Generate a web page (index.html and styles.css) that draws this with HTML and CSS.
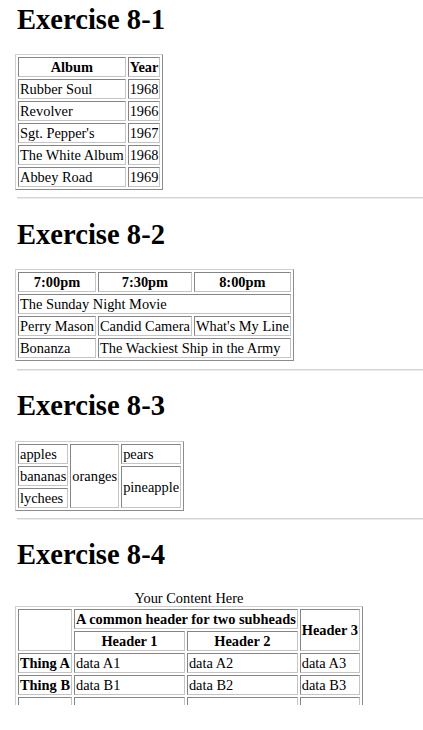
FILE: index.html
```html
<!DOCTYPE html>
<html>
<head>
<meta charset="utf-8">
<title>Exercises</title>
<link rel="stylesheet" href="styles.css">
</head>
<body>
<div class="page">
  <h1 class="first">Exercise 8-1</h1>
  <table class="grid">
    <tr><th>Album</th><th>Year</th></tr>
    <tr><td>Rubber Soul</td><td>1968</td></tr>
    <tr><td>Revolver</td><td>1966</td></tr>
    <tr><td>Sgt. Pepper's</td><td>1967</td></tr>
    <tr><td>The White Album</td><td>1968</td></tr>
    <tr><td>Abbey Road</td><td>1969</td></tr>
  </table>
  <hr class="rule">

  <h1>Exercise 8-2</h1>
  <table class="grid">
    <tr><th>7:00pm</th><th>7:30pm</th><th>8:00pm</th></tr>
    <tr><td colspan="3">The Sunday Night Movie</td></tr>
    <tr><td>Perry Mason</td><td>Candid Camera</td><td>What's My Line</td></tr>
    <tr><td>Bonanza</td><td colspan="2">The Wackiest Ship in the Army</td></tr>
  </table>
  <hr class="rule">

  <h1>Exercise 8-3</h1>
  <table class="grid">
    <tr><td>apples</td><td rowspan="3">oranges</td><td>pears</td></tr>
    <tr><td>bananas</td><td rowspan="2">pineapple</td></tr>
    <tr><td>lychees</td></tr>
  </table>
  <hr class="rule">

  <h1>Exercise 8-4</h1>
  <table class="grid">
    <caption>Your Content Here</caption>
    <tr><td rowspan="2"></td><th colspan="2">A common header for two subheads</th><th rowspan="2">Header 3</th></tr>
    <tr><th>Header 1</th><th>Header 2</th></tr>
    <tr><th>Thing A</th><td>data A1</td><td>data A2</td><td>data A3</td></tr>
    <tr><th>Thing B</th><td>data B1</td><td>data B2</td><td>data B3</td></tr>
    <tr class="cut"><th></th><td></td><td></td><td></td></tr>
  </table>
</div>
</body>
</html>
```

FILE: styles.css
```css
html, body {
  margin: 0;
  padding: 0;
  background: #fff;
}

.page {
  height: 705px;
  overflow: hidden;
  padding-left: 15px;
  font-family: "Liberation Serif", "Times New Roman", serif;
  font-size: 14.4px;
  line-height: 16px;
  color: #000;
}

h1 {
  font-size: 28.6px;
  line-height: 33px;
  font-weight: bold;
  margin: 18.5px 0;
  padding-left: 2px;
}

h1.first {
  margin-top: 2.7px;
}

.grid {
  border-collapse: separate;
  border-spacing: 2px;
  border: 1px solid;
  border-color: #cfcfcf #8c8c8c #8c8c8c #cfcfcf;
}

.grid th,
.grid td {
  border: 1px solid;
  border-color: #858585 #c4c4c4 #c4c4c4 #858585;
  padding: 1px;
  vertical-align: middle;
}

.grid th {
  text-align: center;
  font-weight: bold;
}

.grid td {
  text-align: left;
}

.grid caption {
  text-align: center;
}

.grid .cut th,
.grid .cut td {
  height: 16px;
}

.rule {
  margin: 7.2px 0 7.2px 2px;
  height: 0;
  border: none;
  border-top: 1px solid #d4d4d4;
  border-bottom: 1px solid #ececec;
}
```
